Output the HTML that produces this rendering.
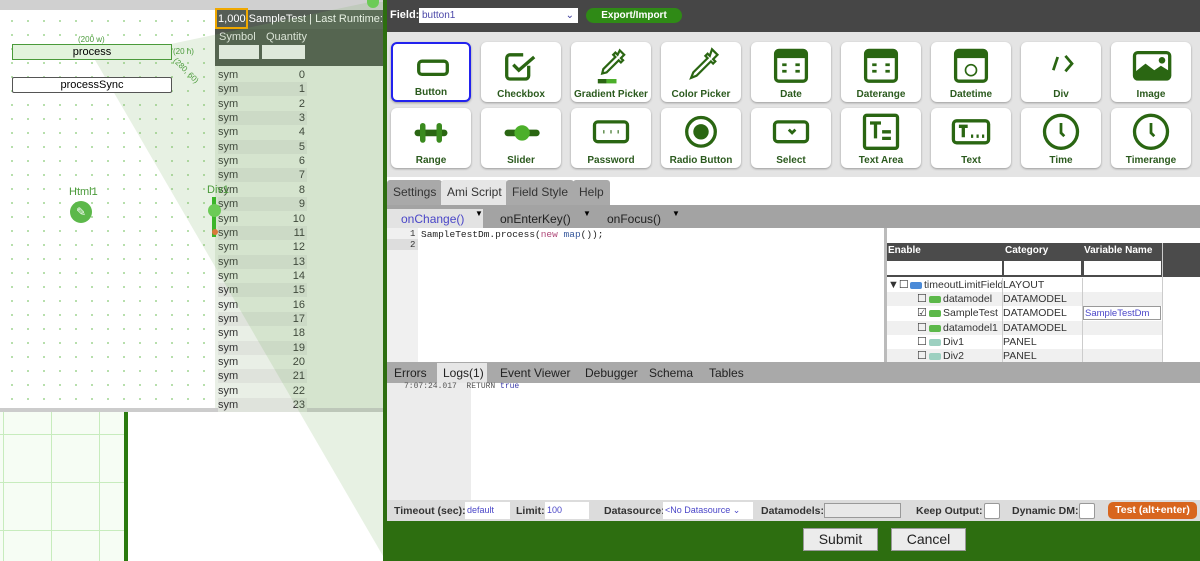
<!DOCTYPE html>
<html><head><style>
*{box-sizing:border-box;margin:0;padding:0}
body{width:1200px;height:561px;overflow:hidden;position:relative;font-family:"Liberation Sans",sans-serif;background:#fff}
.abs{position:absolute}
.canvas{left:0;top:10px;width:215px;height:398px;background-color:#fff;background-image:radial-gradient(#a8d89a 1px,transparent 1.2px);background-size:16px 14px;background-position:4px 4px}
.tbl{left:215px;top:10px;width:168px;height:398px;background:#e9efe6}
.row{position:absolute;left:3px;width:89px;height:14px;font-size:11px;color:#333;line-height:14px}
.row span{position:absolute;right:2px}
.tile{position:absolute;width:80px;height:60px;background:#fff;border-radius:6px;box-shadow:0 1px 2px #999;text-align:center;font-size:10px;font-weight:bold;color:#2b5a1e}
.tile svg{position:absolute;left:20px;top:4px;transform:scale(1.1);transform-origin:20px 0}
.tile b{position:absolute;left:0;right:0;bottom:2px}
.tab{position:absolute;top:180px;height:25px;font-size:12px;line-height:25px;padding:0 6px;background:#a9a9a9;color:#333;border-radius:3px 3px 0 0}
</style></head><body>
<div class="abs" style="left:0;top:0;width:383px;height:10px;background:#d0d0d0"></div>
<div class="abs canvas"></div>
<div class="abs" style="left:0;top:408px;width:383px;height:4px;background:#ccc"></div>
<div class="abs" style="left:0;top:412px;width:125px;height:149px;background-color:#f6fdf4;background-image:linear-gradient(#c7ecbd 1px,transparent 1px),linear-gradient(90deg,#c7ecbd 1px,transparent 1px);background-size:48px 48px;background-position:3px 22px"></div>
<div class="abs" style="left:124px;top:412px;width:4px;height:149px;background:#2a7a0e"></div>
<div class="abs tbl">
 <div class="abs" style="left:0;top:0;width:168px;height:19px;background:#555d55;color:#fff;font-size:11px;line-height:19px;white-space:nowrap;overflow:hidden">&nbsp;1,000 SampleTest | Last Runtime: 11/2</div>
 <div class="abs" style="left:0;top:-2px;width:33px;height:21px;border:2px solid #f0a800"></div>
 <div class="abs" style="left:0;top:19px;width:168px;height:37px;background:#4e554c;color:#eee;font-size:11px"><span class="abs" style="left:4px;top:2px">Symbol</span><span class="abs" style="left:51px;top:2px">Quantity</span>
 <div class="abs" style="left:4px;top:16px;width:40px;height:14px;background:#f4f4f4"></div><div class="abs" style="left:47px;top:16px;width:43px;height:14px;background:#f4f4f4"></div></div>
 <div id="rows"></div>
</div>
<svg class="abs" style="left:0;top:0" width="383" height="561"><polygon points="95,60 370,2 383,2 383,556" fill="rgba(120,180,100,0.18)"/></svg>
<div class="abs" style="left:12px;top:44px;width:160px;height:16px;border:1px solid #4a9a3a;background:#e2f3dc;font-size:11px;text-align:center;line-height:14px">process</div>
<div class="abs" style="left:12px;top:77px;width:160px;height:16px;border:1px solid #555;background:#fff;border-radius:2px;font-size:11px;text-align:center;line-height:14px">processSync</div>
<div class="abs" style="left:78px;top:35px;font-size:8px;color:#4a9a3a">(200 w)</div>
<div class="abs" style="left:173px;top:47px;font-size:8px;color:#4a9a3a">(20 h)</div>
<div class="abs" style="left:170px;top:66px;font-size:8px;color:#4a9a3a;transform:rotate(45deg)">(280, 60)</div>
<div class="abs" style="left:69px;top:186px;font-size:11px;color:#4a9a3a">Html1</div>
<div class="abs" style="left:70px;top:201px;width:22px;height:22px;border-radius:50%;background:#5cb84a;color:#fff;font-size:12px;text-align:center;line-height:22px">✎</div>
<div class="abs" style="left:207px;top:184px;font-size:11px;color:#4a9a3a">Div1</div>
<div class="abs" style="left:212px;top:197px;width:4px;height:40px;background:#3bb52a"></div>
<div class="abs" style="left:208px;top:204px;width:13px;height:13px;border-radius:50%;background:#6ccb56"></div>
<div class="abs" style="left:212px;top:229px;width:6px;height:6px;border-radius:50%;background:#d9783a"></div>
<div class="abs" style="left:367px;top:0;width:12px;height:8px;border-radius:0 0 6px 6px;background:#6ccb56"></div>

<div class="abs" style="left:383px;top:0;width:817px;height:561px;background:#2d6e10"></div>
<div class="abs" style="left:387px;top:0;width:813px;height:32px;background:#464646"></div>
<div class="abs" style="left:390px;top:9px;font-size:11px;color:#fff;font-weight:bold">Field:</div>
<div class="abs" style="left:419px;top:8px;width:159px;height:15px;background:#fff;font-size:10px;color:#4a46a8;line-height:15px;padding-left:3px">button1<span class="abs" style="right:4px;top:0;color:#3a3a9a">⌄</span></div>
<div class="abs" style="left:586px;top:8px;width:96px;height:15px;background:#2f8a16;border-radius:8px;color:#fff;font-size:10px;font-weight:bold;text-align:center;line-height:15px">Export/Import</div>
<div class="abs" style="left:387px;top:32px;width:813px;height:145px;background:#e4e4e4"></div>
<div id="tiles"></div>
<div class="abs" style="left:387px;top:177px;width:813px;height:30px;background:#fff"></div>
<div class="tab" style="left:387px">Settings</div>
<div class="tab" style="left:441px;background:#e6e6e6">Ami Script</div>
<div class="tab" style="left:506px">Field Style</div>
<div class="tab" style="left:573px">Help</div>
<div class="abs" style="left:387px;top:205px;width:813px;height:23px;background:#a3a3a3"></div>
<div class="abs" style="left:387px;top:209px;width:96px;height:19px;background:#e3e3e3;font-size:12px;color:#4a46c8;padding:3px 0 0 14px">onChange()</div>
<div class="abs" style="left:500px;top:212px;font-size:12px;color:#222">onEnterKey()</div>
<div class="abs" style="left:607px;top:212px;font-size:12px;color:#222">onFocus()</div>
<div class="abs" style="left:475px;top:209px;font-size:8px">▼</div><div class="abs" style="left:583px;top:209px;font-size:8px">▼</div><div class="abs" style="left:672px;top:209px;font-size:8px">▼</div>
<div class="abs" style="left:387px;top:228px;width:497px;height:134px;background:#fff"></div>
<div class="abs" style="left:387px;top:228px;width:31px;height:134px;background:#f0f0f0"></div>
<div class="abs" style="left:387px;top:239px;width:31px;height:11px;background:#ddd"></div>
<div class="abs" style="left:410px;top:229px;font-family:'Liberation Mono',monospace;font-size:9px;color:#333;line-height:11px">1<br>2</div>
<div class="abs" style="left:421px;top:229px;font-family:'Liberation Mono',monospace;font-size:9.5px;color:#222">SampleTestDm.process(<span style="color:#b04a7a">new</span> <span style="color:#33559a">map</span>());</div>
<div class="abs" style="left:884px;top:228px;width:316px;height:134px;background:#fff;border-left:3px solid #bbb"></div>
<div class="abs" style="left:887px;top:243px;width:313px;height:34px;background:#4b4b4b"></div>
<div class="abs" style="left:888px;top:245px;font-size:10px;color:#fff;font-weight:bold">Enable</div>
<div class="abs" style="left:1005px;top:245px;font-size:10px;color:#fff;font-weight:bold">Category</div>
<div class="abs" style="left:1084px;top:245px;font-size:10px;color:#fff;font-weight:bold">Variable Name</div>
<div class="abs" style="left:887px;top:261px;width:115px;height:14px;background:#fff"></div>
<div class="abs" style="left:1004px;top:261px;width:77px;height:14px;background:#fff"></div>
<div class="abs" style="left:1084px;top:261px;width:77px;height:14px;background:#fff"></div>
<div id="tree"></div>
<div class="abs" style="left:387px;top:362px;width:813px;height:21px;background:#a9a9a9"></div>
<div class="abs" style="left:387px;top:362px;width:813px;height:21px;font-size:12px;color:#222;line-height:23px">
<span class="abs" style="left:7px">Errors</span><span class="abs" style="left:50px;width:50px;padding-left:6px;background:#e6e6e6;top:1px;height:20px;line-height:21px">Logs(1)</span><span class="abs" style="left:113px">Event Viewer</span><span class="abs" style="left:198px">Debugger</span><span class="abs" style="left:262px">Schema</span><span class="abs" style="left:322px">Tables</span></div>
<div class="abs" style="left:387px;top:383px;width:813px;height:117px;background:#fff"></div>
<div class="abs" style="left:387px;top:383px;width:84px;height:117px;background:#ececec"></div>
<div class="abs" style="left:404px;top:382px;font-family:'Liberation Mono',monospace;font-size:8px;color:#555">7:07:24.017&nbsp;&nbsp;RETURN <span style="color:#3a3aa8">true</span></div>
<div class="abs" style="left:387px;top:500px;width:813px;height:21px;background:#dcdcdc;font-size:10.5px;color:#333;font-weight:bold">
<span class="abs" style="left:7px;top:5px">Timeout (sec):</span><span class="abs" style="left:78px;top:2px;width:45px;height:17px;background:#fff;color:#4a46c8;font-weight:normal;font-size:9px;padding:3px 2px">default</span>
<span class="abs" style="left:129px;top:5px">Limit:</span><span class="abs" style="left:158px;top:2px;width:44px;height:17px;background:#fff;color:#4a46c8;font-weight:normal;font-size:9px;padding:3px 2px">100</span>
<span class="abs" style="left:217px;top:5px">Datasource:</span><span class="abs" style="left:276px;top:2px;width:90px;height:17px;background:#fff;color:#4a46c8;font-weight:normal;font-size:9px;padding:3px 2px">&lt;No Datasource ⌄</span>
<span class="abs" style="left:374px;top:5px">Datamodels:</span><span class="abs" style="left:437px;top:3px;width:77px;height:15px;background:#e8e8e8;border:1px solid #999"></span>
<span class="abs" style="left:529px;top:5px">Keep Output:</span><span class="abs" style="left:597px;top:3px;width:16px;height:16px;background:#fff;border:1px solid #999;border-radius:2px"></span>
<span class="abs" style="left:625px;top:5px">Dynamic DM:</span><span class="abs" style="left:692px;top:3px;width:16px;height:16px;background:#fff;border:1px solid #999;border-radius:2px"></span>
<span class="abs" style="left:721px;top:2px;width:89px;height:17px;background:#d8661e;border-radius:5px;color:#fff;text-align:center;line-height:17px">Test (alt+enter)</span></div>
<div class="abs" style="left:803px;top:528px;width:75px;height:23px;background:#ececec;border:1px solid #999;font-size:14px;text-align:center;line-height:21px;color:#222">Submit</div>
<div class="abs" style="left:891px;top:528px;width:75px;height:23px;background:#ececec;border:1px solid #999;font-size:14px;text-align:center;line-height:21px;color:#222">Cancel</div>
<script>
var r='';for(var i=0;i<24;i++){var y=58+i*14.35;r+='<div class="row" style="top:'+y+'px;background:'+(i%2?'#dfe3dc':(i==21||i==23?'#fff':'#e9efe6'))+'">sym<span>'+i+'</span></div>';}
document.getElementById('rows').innerHTML=r;
var G='#2a6612';
var ic={
Button:'<rect x="7" y="12" width="26" height="12" rx="3" fill="none" stroke="'+G+'" stroke-width="3"/>',
Checkbox:'<path d="M27 18v9a3 3 0 0 1-3 3H10a3 3 0 0 1-3-3V11a3 3 0 0 1 3-3h12" fill="none" stroke="'+G+'" stroke-width="3"/><path d="M13 17l5 5 14-12" fill="none" stroke="'+G+'" stroke-width="3"/>',
'Gradient Picker':'<path d="M28 4l4 4-3 3 2 2-2 2-2-2-11 11-4 1 1-4 11-11-2-2 2-2 2 2z" fill="none" stroke="'+G+'" stroke-width="2"/><rect x="8" y="30" width="8" height="4" fill="'+G+'"/><rect x="16" y="30" width="9" height="4" fill="#4caf2a"/>',
'Color Picker':'<path d="M30 3l5 5-4 4 2 2-2 2-2-2-13 13-5 2 2-5 13-13-2-2 2-2 2 2z" fill="none" stroke="'+G+'" stroke-width="2"/>',
Date:'<rect x="6" y="4" width="28" height="28" rx="3" fill="none" stroke="'+G+'" stroke-width="3"/><rect x="6" y="4" width="28" height="7" fill="'+G+'"/><path d="M12 17h4M24 17h4M12 23h4M24 23h4" stroke="'+G+'" stroke-width="2.5"/>',
Daterange:'<rect x="6" y="4" width="28" height="28" rx="3" fill="none" stroke="'+G+'" stroke-width="3"/><rect x="6" y="4" width="28" height="7" fill="'+G+'"/><path d="M12 17h4M24 17h4M12 23h4M24 23h4" stroke="'+G+'" stroke-width="2.5"/>',
Datetime:'<rect x="6" y="4" width="28" height="28" rx="3" fill="none" stroke="'+G+'" stroke-width="3"/><rect x="6" y="4" width="28" height="7" fill="'+G+'"/><circle cx="20" cy="22" r="5" fill="none" stroke="'+G+'" stroke-width="1.5"/>',
Div:'<path d="M17 10l-4 12M24 9l6 7-6 7" fill="none" stroke="'+G+'" stroke-width="2.5"/>',
Image:'<rect x="5" y="6" width="32" height="24" rx="3" fill="none" stroke="'+G+'" stroke-width="3"/><path d="M5 24l10-8 8 6 6-4 8 5v7H5z" fill="'+G+'"/><circle cx="30" cy="13" r="3" fill="'+G+'"/>',
Range:'<rect x="5" y="16" width="30" height="6" rx="3" fill="'+G+'"/><rect x="10" y="10" width="5" height="18" rx="2.5" fill="#3a8a1e"/><rect x="25" y="10" width="5" height="18" rx="2.5" fill="#3a8a1e"/>',
Slider:'<rect x="5" y="16" width="32" height="6" rx="3" fill="'+G+'"/><circle cx="21" cy="19" r="7" fill="#4caf2a"/>',
Password:'<rect x="5" y="9" width="30" height="18" rx="3" fill="none" stroke="'+G+'" stroke-width="3"/><path d="M13 18h1M19.5 18h1M26 18h1" stroke="'+G+'" stroke-width="3"/>',
'Radio Button':'<circle cx="20" cy="18" r="13" fill="none" stroke="'+G+'" stroke-width="3"/><circle cx="20" cy="18" r="7" fill="'+G+'"/>',
Select:'<rect x="5" y="9" width="30" height="18" rx="3" fill="none" stroke="'+G+'" stroke-width="3"/><path d="M18 16l3 3 3-3" fill="none" stroke="'+G+'" stroke-width="2.5"/>',
'Text Area':'<rect x="5" y="3" width="30" height="30" rx="2" fill="none" stroke="'+G+'" stroke-width="3"/><path d="M10 10h10M15 10v14M21 18h8M21 24h8" stroke="'+G+'" stroke-width="3"/>',
Text:'<rect x="4" y="8" width="32" height="20" rx="3" fill="none" stroke="'+G+'" stroke-width="3"/><path d="M9 13h8M13 13v10" stroke="'+G+'" stroke-width="3"/><path d="M20 22h2M25 22h2M30 22h2" stroke="'+G+'" stroke-width="3"/>',
Time:'<circle cx="20" cy="18" r="15" fill="none" stroke="'+G+'" stroke-width="3"/><path d="M20 10v9l3 3" fill="none" stroke="'+G+'" stroke-width="2.5"/>',
Timerange:'<circle cx="20" cy="18" r="15" fill="none" stroke="'+G+'" stroke-width="3"/><path d="M20 10v9l3 3" fill="none" stroke="'+G+'" stroke-width="2.5"/>'};
var names=['Button','Checkbox','Gradient Picker','Color Picker','Date','Daterange','Datetime','Div','Image','Range','Slider','Password','Radio Button','Select','Text Area','Text','Time','Timerange'];
var t='';names.forEach(function(n,i){var x=391+(i%9)*90,y=i<9?42:108;
t+='<div class="tile" style="left:'+x+'px;top:'+y+'px;'+(i==0?'border:2px solid #2222ee;':'')+'"><svg width="40" height="38">'+ic[n]+'</svg><b>'+n+'</b></div>';});
document.getElementById('tiles').innerHTML=t;
var tr=[['▼☐','timeoutLimitField','LAYOUT','',888,'#4a8ad8'],['☐','datamodel','DATAMODEL','',917,'#5cb84a'],['☑','SampleTest','DATAMODEL','SampleTestDm',917,'#5cb84a'],['☐','datamodel1','DATAMODEL','',917,'#5cb84a'],['☐','Div1','PANEL','',917,'#9cd0c0'],['☐','Div2','PANEL','',917,'#9cd0c0']];
var s='';tr.forEach(function(a,i){var y=278+i*14.2;
s+='<div class="abs" style="left:887px;top:'+y+'px;width:275px;height:14px;background:'+(i%2?'#f0f0f0':'#fff')+';font-size:10.5px;color:#333;line-height:14px;overflow:hidden"><span class="abs" style="left:'+(a[4]-887)+'px;font-size:11px">'+a[0]+'</span><span class="abs" style="left:'+(a[4]-887+(i?12:22))+'px;top:4px;width:12px;height:7px;border-radius:2px;background:'+a[5]+'"></span><span class="abs" style="left:'+(a[4]-887+(i?26:36))+'px;width:'+(115-(a[4]-887+(i?26:36)))+'px;overflow:hidden;white-space:nowrap">'+a[1]+'</span><span class="abs" style="left:116px">'+a[2]+'</span>'+(a[3]?'<span class="abs" style="left:196px;width:78px;height:14px;border:1px solid #999;color:#4a46c8;font-size:9.5px;padding-left:1px">'+a[3]+'</span>':'')+'</div>';});
s+='<div class="abs" style="left:1002px;top:278px;width:1px;height:84px;background:#ccc"></div><div class="abs" style="left:1082px;top:278px;width:1px;height:84px;background:#ccc"></div><div class="abs" style="left:1162px;top:243px;width:1px;height:119px;background:#ccc"></div>';
document.getElementById('tree').innerHTML=s;
</script>
</body></html>
